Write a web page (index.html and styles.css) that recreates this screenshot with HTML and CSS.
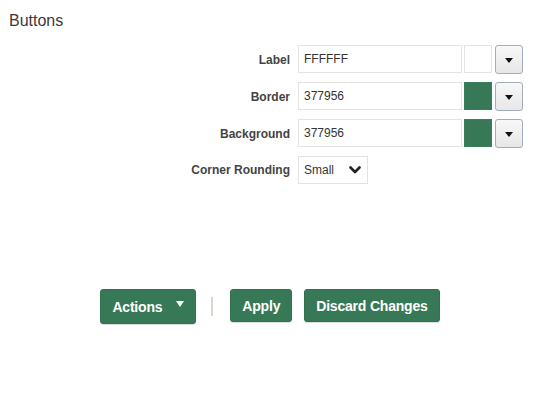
FILE: index.html
```html
<!DOCTYPE html>
<html>
<head>
<meta charset="utf-8">
<link rel="stylesheet" href="styles.css">
</head>
<body>
<div class="page">
  <h1 class="title">Buttons</h1>
  <div class="form">
    <label class="lbl">Label</label>
    <div class="field">
      <input class="text" type="text" value="FFFFFF">
      <span class="swatch swatch-white"></span>
      <button class="drop" type="button"><span class="tri"></span></button>
    </div>
    <label class="lbl">Border</label>
    <div class="field">
      <input class="text" type="text" value="377956">
      <span class="swatch swatch-green"></span>
      <button class="drop" type="button"><span class="tri"></span></button>
    </div>
    <label class="lbl">Background</label>
    <div class="field">
      <input class="text" type="text" value="377956">
      <span class="swatch swatch-green"></span>
      <button class="drop" type="button"><span class="tri"></span></button>
    </div>
    <label class="lbl">Corner Rounding</label>
    <div class="field">
      <div class="select">
        <span>Small</span>
        <svg class="chev" width="12" height="8" viewBox="0 0 12 8"><path d="M1.5 1.5 L6 6 L10.5 1.5" fill="none" stroke="#222" stroke-width="2.6" stroke-linecap="round" stroke-linejoin="round"/></svg>
      </div>
    </div>
  </div>
  <div class="actions">
    <button class="btn btn-menu" type="button">Actions <span class="btn-tri"></span></button>
    <span class="sep"></span>
    <button class="btn" type="button">Apply</button>
    <button class="btn" type="button">Discard Changes</button>
  </div>
</div>
</body>
</html>
```
FILE: styles.css
```css
html, body {
  margin: 0;
  padding: 0;
  background: #fff;
}
body {
  font-family: "Liberation Sans", Arial, sans-serif;
  color: #333;
}
.page {
  width: 540px;
  height: 400px;
  padding-top: 12px;
  box-sizing: border-box;
}
.title {
  margin: 0 0 0 9px;
  font-size: 16px;
  font-weight: normal;
  line-height: 18px;
  color: #3a3a3a;
}
.form {
  display: grid;
  grid-template-columns: 290px auto;
  column-gap: 8px;
  row-gap: 8px;
  margin-top: 15px;
  align-items: center;
}
.lbl {
  text-align: right;
  font-size: 12px;
  font-weight: bold;
  color: #444;
}
.field {
  display: flex;
  align-items: flex-start;
}
.text {
  width: 164px;
  height: 28px;
  box-sizing: border-box;
  border: 1px solid #e3e3e3;
  border-radius: 0;
  padding: 0 5px;
  font-family: "Liberation Sans", Arial, sans-serif;
  font-size: 12px;
  color: #333;
  background: #fff;
  outline: none;
  margin: 0;
}
.swatch {
  width: 28px;
  height: 28px;
  box-sizing: border-box;
  margin-left: 2px;
  border: 1px solid #e3e3e3;
}
.swatch-white {
  background: #fff;
}
.swatch-green {
  background: #377956;
  border-color: #3c7e5b;
}
.drop {
  width: 28px;
  height: 29px;
  margin: 0 0 0 3px;
  padding: 0;
  box-sizing: border-box;
  border: 1px solid #a2acbb;
  border-radius: 3px;
  background: linear-gradient(#f8f8f8, #e7e7e7);
  display: flex;
  align-items: center;
  justify-content: center;
}
.tri {
  width: 0;
  height: 0;
  border-left: 4px solid transparent;
  border-right: 4px solid transparent;
  border-top: 5px solid #111;
  margin-top: 1px;
}
.select {
  width: 70px;
  height: 28px;
  box-sizing: border-box;
  border: 1px solid #e3e3e3;
  display: flex;
  align-items: center;
  justify-content: space-between;
  padding: 0 6px 0 5px;
  font-size: 12px;
  color: #333;
}
.chev {
  display: block;
}
.actions {
  display: flex;
  justify-content: center;
  align-items: flex-start;
  margin-top: 105px;
}
.btn {
  height: 33px;
  padding: 0 11px;
  margin: 0 12px 0 0;
  border: 1px solid #33714f;
  border-radius: 3px;
  background: #377956;
  color: #fff;
  font-family: "Liberation Sans", Arial, sans-serif;
  font-size: 14px;
  font-weight: bold;
  letter-spacing: -0.2px;
  display: flex;
  align-items: center;
  box-shadow: 0 1px 1px rgba(0,0,0,0.15);
}
.btn:last-child {
  margin-right: 0;
}
.btn-menu {
  height: 35px;
  margin-right: 0;
}
.btn-tri {
  width: 0;
  height: 0;
  border-left: 4px solid transparent;
  border-right: 4px solid transparent;
  border-top: 6px solid #fff;
  margin-left: 14px;
  margin-top: -6px;
}
.sep {
  width: 2px;
  height: 19px;
  background: #ddd6cc;
  margin: 8px 17px 0 15px;
}
```
